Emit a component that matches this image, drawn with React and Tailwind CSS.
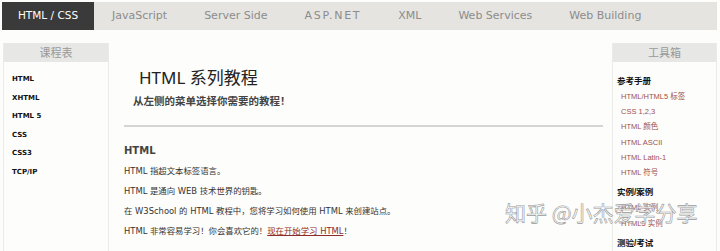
import React from "react";

const tabs = ["JavaScript", "Server Side", "ASP.NET", "XML", "Web Services", "Web Building"];

const courses = ["HTML", "XHTML", "HTML 5", "CSS", "CSS3", "TCP/IP"];

const tools = [
  { title: "参考手册", links: ["HTML/HTML5 标签", "CSS 1,2,3", "HTML 颜色", "HTML ASCII", "HTML Latin-1", "HTML 符号"] },
  { title: "实例/案例", links: ["HTML 实例", "HTML5 实例"] },
  { title: "测验/考试", links: [] },
];

const App = () => {
  return (
    <div className="relative w-[720px] h-[251px] overflow-hidden bg-[#fdfdfb] font-['DejaVu_Sans','Noto_Sans_CJK_SC',sans-serif] text-[#333]">
      <div className="mx-[2px] mt-[2px] h-[28px] w-[715px] bg-[#e5e4e0] flex items-center">
        <div className="w-[92px] h-full bg-[#3a3a3a] text-white text-[10.5px] flex items-center justify-center">HTML / CSS</div>
        <div className="flex items-center gap-[37px] pl-[18px] text-[11px] text-[#8c8c8c]">
          {tabs.map((t) => (
            <span key={t} className={t === "ASP.NET" ? "tracking-[1.7px]" : ""}>
              {t}
            </span>
          ))}
        </div>
      </div>

      <div className="flex mt-[13px] h-[208px]">
        <div className="ml-[3px] w-[106px] border-x border-[#ebebe9] flex flex-col">
          <div className="h-[19px] bg-[#e7e7e5] text-[#999] text-[11px] flex items-center justify-center font-['Noto_Sans_CJK_SC',sans-serif]">课程表</div>
          <ul className="pt-[8px] pl-[8px] text-[7px] font-bold text-[#111] leading-[18.6px]">
            {courses.map((c) => (
              <li key={c}>{c}</li>
            ))}
          </ul>
        </div>

        <div className="flex-1 pl-[15px] pr-[9px] pt-[25px]">
          <h1 className="ml-[15px] text-[17px] leading-[20px] text-[#222] font-['Noto_Sans','Noto_Sans_CJK_SC',sans-serif]">HTML 系列教程</h1>
          <h2 className="ml-[9px] mt-[6px] text-[10.5px] leading-[14px] font-bold text-[#444] font-['Noto_Sans_CJK_SC',sans-serif]">从左侧的菜单选择你需要的教程！</h2>
          <div className="mt-[17px] h-[2px] bg-[#d4d4d2]"></div>
          <h3 className="mt-[17px] text-[10px] leading-[14px] font-bold text-[#444]">HTML</h3>
          <div className="mt-[7px] flex flex-col gap-[8px] text-[8.4px] leading-[12px] text-[#333]">
            <p>HTML 指超文本标签语言。</p>
            <p>HTML 是通向 WEB 技术世界的钥匙。</p>
            <p>在 W3School 的 HTML 教程中，您将学习如何使用 HTML 来创建站点。</p>
            <p>
              HTML 非常容易学习！你会喜欢它的！<span className="text-[#8b2b2b] underline">现在开始学习 HTML</span>！
            </p>
          </div>
        </div>

        <div className="mr-[3px] w-[105px] border-x border-[#ebebe9] flex flex-col">
          <div className="h-[19px] bg-[#e7e7e5] text-[#999] text-[11px] flex items-center justify-center font-['Noto_Sans_CJK_SC',sans-serif]">工具箱</div>
          <div className="pt-[11px] pl-[4px] font-['Liberation_Sans','Noto_Sans_CJK_SC',sans-serif]">
            {tools.map((g, i) => (
              <div key={g.title} className={i > 0 ? "mt-[4px]" : ""}>
                <div className="h-[16px] leading-[16px] text-[8.5px] font-bold text-[#111]">{g.title}</div>
                {g.links.map((l) => (
                  <div key={l} className="pl-[4px] h-[15.3px] leading-[15.3px] text-[7.5px] text-[#a0504c]">
                    {l}
                  </div>
                ))}
              </div>
            ))}
          </div>
        </div>
      </div>

      <div className="absolute left-[505px] top-[199px] text-[21px] leading-[26px] text-white/70 [-webkit-text-stroke:0.6px_#9a9a9a] font-['Noto_Sans_CJK_SC',sans-serif] whitespace-nowrap">
        知乎 @小杰爱学分享
      </div>
    </div>
  );
};

export default App;
